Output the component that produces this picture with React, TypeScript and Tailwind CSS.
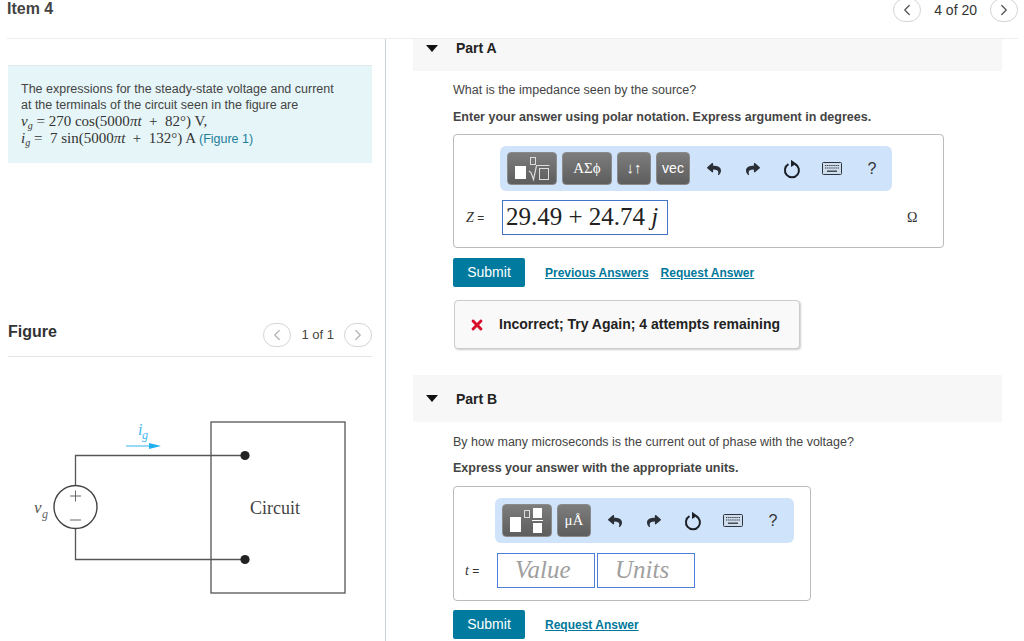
import { ChevronLeft, ChevronRight } from 'lucide-react';
import { FaReply, FaShare, FaTimes } from 'react-icons/fa';

const sans = "font-['Liberation_Sans',Arial,sans-serif]";
const serif = "font-['Liberation_Serif','Times_New_Roman',serif]";

function RoundBtn({ dir, faded }: { dir: 'left' | 'right'; faded?: boolean }) {
  const Icon = dir === 'left' ? ChevronLeft : ChevronRight;
  return (
    <span className="w-[28px] h-[24px] rounded-full border border-[#d4d4d4] bg-white flex items-center justify-center">
      <Icon size={18} strokeWidth={1.7} className={faded ? 'text-[#b5b5b5]' : 'text-[#555]'} />
    </span>
  );
}

function PartHeader({ label, tall }: { label: string; tall?: boolean }) {
  return (
    <div className={`bg-[#f7f7f7] flex pl-[13px] ${tall ? 'h-[47px] items-center' : 'h-[32px] items-start pt-[1px]'}`}>
      <span className={`w-0 h-0 border-l-[6px] border-r-[6px] border-t-[7px] border-l-transparent border-r-transparent border-t-[#111] ${tall ? '' : 'mt-[5px]'}`} />
      <span className="ml-[18px] text-[14px] leading-[16px] font-bold text-[#222]">{label}</span>
    </div>
  );
}

function Tool({ className, children }: { className: string; children: React.ReactNode }) {
  return (
    <span className={`h-[33px] rounded-[4px] bg-gradient-to-b from-[#7d7d7d] to-[#5d5d5d] border border-[#8a8a8a] flex items-center justify-center text-white ${className}`}>
      {children}
    </span>
  );
}

function KeyboardIcon() {
  return (
    <svg width="20" height="13" viewBox="0 0 20 13">
      <rect x="0.5" y="0.5" width="19" height="12" rx="1" fill="#cfdcec" stroke="#2c3440" />
      <path d="M3 3.5h14M3 6h14" stroke="#2c3440" strokeWidth="1.2" strokeDasharray="1.3 0.8" />
      <path d="M5 9.2h10" stroke="#2c3440" strokeWidth="1.3" />
    </svg>
  );
}

function ResetIcon() {
  return (
    <svg width="18" height="20" viewBox="0 0 18 20">
      <path d="M5.5 5.2a7 7 0 1 0 6.5-.2" fill="none" stroke="#1d2127" strokeWidth="2" />
      <path d="M8 .8l5.4 3.9-5.4 3.4z" fill="#1d2127" />
    </svg>
  );
}

function ToolIcons({ gap }: { gap: string }) {
  return (
    <div className={`flex items-center text-[#2b3038] ${gap}`}>
      <span className="w-[18px] flex justify-center"><FaReply size={14} /></span>
      <span className="w-[18px] flex justify-center"><FaShare size={14} /></span>
      <span className="w-[18px] flex justify-center"><ResetIcon /></span>
      <span className="w-[20px] flex justify-center"><KeyboardIcon /></span>
      <span className="w-[18px] flex justify-center text-[16px] text-[#333]">?</span>
    </div>
  );
}

function Circuit() {
  return (
    <svg width="360" height="230" viewBox="0 0 360 230" className="block">
      <rect x="211" y="21" width="134" height="171" fill="none" stroke="#555" strokeWidth="1.3" />
      <path d="M75.500 85V54.500H245M75.500 127V158.500H245" fill="none" stroke="#555" strokeWidth="1.3" />
      <circle cx="75.500" cy="106" r="21.500" fill="#fff" stroke="#444" strokeWidth="1.4" />
      <path d="M70 95h11M75.500 89.500v11M70 119h11" stroke="#666" strokeWidth="1" />
      <circle cx="245" cy="54.500" r="4.600" fill="#222" />
      <circle cx="245" cy="158.500" r="4.600" fill="#222" />
      <path d="M126 45h26" stroke="#35b4ee" strokeWidth="1" />
      <path d="M149 42l12 3-12 3z" fill="#1fb0f0" />
      <text x="138" y="34" fontFamily="Liberation Serif" fontStyle="italic" fontSize="16" fill="#3fb8ee">i</text>
      <text x="142" y="38" fontFamily="Liberation Serif" fontStyle="italic" fontSize="12" fill="#3fb8ee">g</text>
      <text x="34" y="112" fontFamily="Liberation Serif" fontStyle="italic" fontSize="17" fill="#555">v</text>
      <text x="42" y="117" fontFamily="Liberation Serif" fontStyle="italic" fontSize="12" fill="#666">g</text>
      <text x="250" y="113" fontFamily="Liberation Serif" fontSize="18" fill="#444">Circuit</text>
    </svg>
  );
}

export default function App() {
  return (
    <div className={`w-[1024px] h-[641px] overflow-hidden bg-white text-[#333] ${sans}`}>
      {/* top bar */}
      <div className="h-[39px] ml-[7px] mr-[6px] border-b border-[#eeeeee] flex items-start justify-between">
        <span className="text-[16px] leading-[18px] font-bold text-[#444]">Item 4</span>
        <div className="flex items-center -mt-[2px]">
          <RoundBtn dir="left" />
          <span className="mx-[13px] text-[14px] text-[#333]">4 of 20</span>
          <RoundBtn dir="right" />
        </div>
      </div>

      <div className="flex h-[602px]">
        {/* left column */}
        <div className="w-[386px] border-r border-[#c9d2dc] pl-[8px] pr-[13px] pt-[26px]">
          <div className="h-[98px] bg-[#e6f5f7] border-t border-[#dfe9ea] pl-[13px] pt-[15px] text-[12.500px] leading-[16px] text-[#444]">
            <p>The expressions for the steady-state voltage and current</p>
            <p>at the terminals of the circuit seen in the figure are</p>
            <p className={`${serif} text-[15px] leading-[17px] text-[#333]`}>
              <i>v<sub className="text-[10px]">g</sub></i> = 270 cos(5000<i>πt</i> &nbsp;+ &nbsp;82°) V,
            </p>
            <p className={`${serif} text-[15px] leading-[17px] text-[#333]`}>
              <i>i<sub className="text-[10px]">g</sub></i> = &nbsp;7 sin(5000<i>πt</i> &nbsp;+ &nbsp;132°) A{' '}
              <span className={`${sans} text-[12.500px] text-[#1d7f9c]`}>(Figure 1)</span>
            </p>
          </div>
          <div className="mt-[157px] h-[37px] border-b border-[#e5e5e5] flex items-start justify-between">
            <span className="text-[16px] leading-[18px] font-bold text-[#333] mt-[3px]">Figure</span>
            <div className="flex items-center mt-[3px]">
              <RoundBtn dir="left" faded />
              <span className="mx-[10px] text-[13px] text-[#444]">1 of 1</span>
              <RoundBtn dir="right" faded />
            </div>
          </div>
          <div className="-ml-[8px] mt-[44px]">
            <Circuit />
          </div>
        </div>

        {/* right column */}
        <div className="w-[589px] ml-[27px]">
          <PartHeader label="Part A" />
          <div className="pl-[40px]">
            <p className="mt-[11px] text-[12.500px] leading-[16px] text-[#444]">What is the impedance seen by the source?</p>
            <p className="mt-[11px] text-[12.500px] leading-[16px] font-bold text-[#444]">Enter your answer using polar notation. Express argument in degrees.</p>

            <div className="mt-[9px] w-[491px] h-[114px] border border-[#bbbbbb] rounded-[4px] pt-[11px]">
              <div className="ml-[46px] w-[392px] h-[45px] bg-[#cfe4fb] rounded-[6px] pl-[7px] pt-[6px] flex items-start">
                <Tool className="w-[50px]">
                  <svg width="44" height="28" viewBox="0 0 44 28">
                    <rect x="5" y="11" width="11" height="13" fill="#fff" />
                    <rect x="20.500" y="2.500" width="5" height="7" fill="none" stroke="#ddd" />
                    <path d="M19 16l2 1.500 2.500 7 3-14h13" fill="none" stroke="#ddd" strokeWidth="1.2" />
                    <rect x="29.500" y="13.500" width="9" height="11" fill="none" stroke="#ddd" />
                  </svg>
                </Tool>
                <Tool className={`w-[50px] ml-[5px] ${serif} text-[15px]`}>ΑΣϕ</Tool>
                <Tool className="w-[34px] ml-[5px] text-[15px]">↓↑</Tool>
                <Tool className="w-[34px] ml-[5px] text-[14px]">vec</Tool>
                <div className="ml-[15px] h-[33px] flex items-center">
                  <ToolIcons gap="gap-[21px]" />
                </div>
              </div>
              <div className="mt-[9px] flex items-center">
                <span className="w-[48px] pl-[12px] text-[12px] text-[#333]"><i className={`${serif} text-[14px]`}>Z</i> =</span>
                <span className={`w-[166px] h-[35px] border border-[#4472c4] pl-[3px] ${serif} text-[25px] leading-[32px] text-[#222]`}>
                  29.49 + 24.74 <i>j</i>
                </span>
                <span className={`ml-[239px] ${serif} text-[14px]`}>Ω</span>
              </div>
            </div>

            <div className="mt-[10px] flex items-center">
              <span className="w-[72px] h-[29px] bg-[#007b9f] rounded-[2px] text-white text-[14px] flex items-center justify-center">Submit</span>
              <a className="ml-[20px] text-[12px] font-bold text-[#00789b] underline">Previous Answers</a>
              <a className="ml-[12px] text-[12px] font-bold text-[#00789b] underline">Request Answer</a>
            </div>

            <div className="mt-[13px] ml-[1px] w-[346px] h-[49px] bg-[#f9f9f9] border border-[#cccccc] rounded-[4px] shadow-[1px_1px_2px_rgba(0,0,0,0.2)] flex items-center pl-[14px]">
              <FaTimes size={16} className="text-[#d80f2a]" />
              <span className="ml-[14px] text-[14px] font-bold text-[#222]">Incorrect; Try Again; 4 attempts remaining</span>
            </div>
          </div>

          <div className="mt-[26px]">
            <PartHeader label="Part B" tall />
          </div>
          <div className="pl-[40px]">
            <p className="mt-[12px] text-[12.500px] leading-[16px] text-[#444]">By how many microseconds is the current out of phase with the voltage?</p>
            <p className="mt-[10px] text-[12.500px] leading-[16px] font-bold text-[#444]">Express your answer with the appropriate units.</p>

            <div className="mt-[10px] w-[358px] h-[115px] border border-[#bbbbbb] rounded-[4px] pt-[11px]">
              <div className="ml-[41px] w-[299px] h-[45px] bg-[#cfe4fb] rounded-[6px] pl-[7px] pt-[6px] flex items-start">
                <Tool className="w-[50px]">
                  <svg width="44" height="28" viewBox="0 0 44 28">
                    <rect x="5" y="10" width="11" height="15" fill="#fff" />
                    <rect x="19.500" y="3.500" width="5" height="7" fill="none" stroke="#ddd" />
                    <rect x="28" y="1" width="9" height="10" fill="#fff" />
                    <path d="M27 13.500h11" stroke="#fff" />
                    <rect x="28" y="16" width="9" height="10" fill="#fff" />
                  </svg>
                </Tool>
                <Tool className={`w-[34px] ml-[5px] ${serif} text-[15px]`}>μÅ</Tool>
                <div className="ml-[15px] h-[33px] flex items-center">
                  <ToolIcons gap="gap-[21px]" />
                </div>
              </div>
              <div className="mt-[10px] flex items-center">
                <span className="w-[43px] pl-[11px] text-[12px] text-[#333]"><i className={`${serif} text-[14px]`}>t</i> =</span>
                <span className={`w-[98px] h-[35px] border border-[#4f7fd8] pl-[17px] ${serif} italic text-[25px] leading-[32px] text-[#a0a0a0]`}>Value</span>
                <span className={`w-[98px] h-[35px] ml-[2px] border border-[#4f7fd8] pl-[17px] ${serif} italic text-[25px] leading-[32px] text-[#a0a0a0]`}>Units</span>
              </div>
            </div>

            <div className="mt-[9px] flex items-center">
              <span className="w-[72px] h-[29px] bg-[#007b9f] rounded-[2px] text-white text-[14px] flex items-center justify-center">Submit</span>
              <a className="ml-[20px] text-[12px] font-bold text-[#00789b] underline">Request Answer</a>
            </div>
          </div>
        </div>
      </div>
    </div>
  );
}
